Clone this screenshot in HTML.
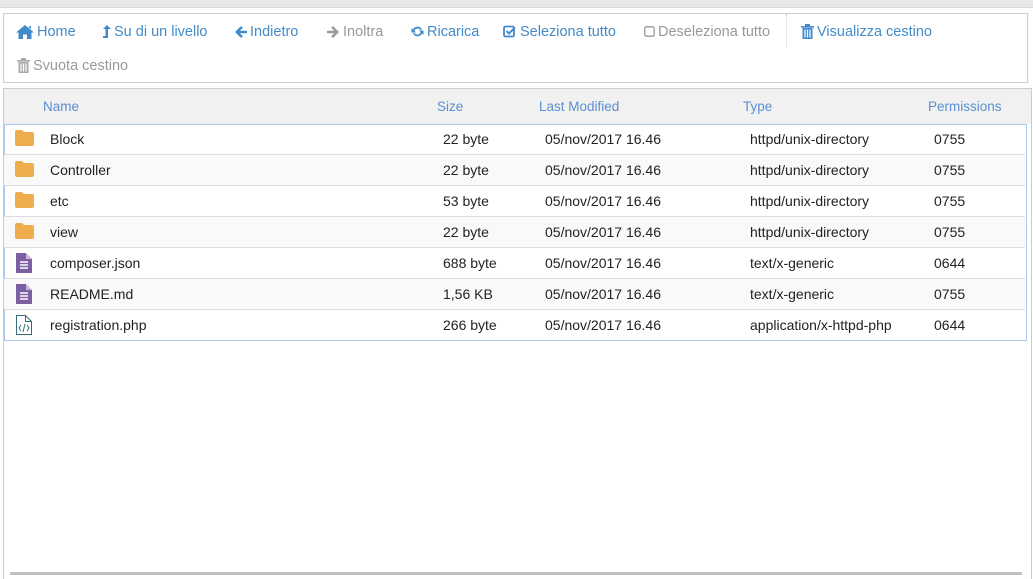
<!DOCTYPE html><html><head><style>
body{margin:0;width:1033px;height:575px;overflow:hidden;background:#fff;font-family:"Liberation Sans",sans-serif;position:relative}
.top{position:absolute;left:0;top:0;width:1033px;height:7px;background:#e8e8e8;border-bottom:1px solid #d8d8d8}
.tb{position:absolute;left:3px;top:13px;width:1023px;height:68px;border:1px solid #ccc}
.b{position:absolute;font-size:14.5px;color:#428bca;white-space:nowrap;line-height:16px}
.i{position:absolute}
.g{color:#999}
.sep{position:absolute;left:782px;top:0px;height:34px;border-left:1px dotted #ccc}
.tbl{position:absolute;left:3px;top:88px;width:1027px;height:490px;border:1px solid #ccc;border-bottom:none}
.hd{position:absolute;left:0;top:0;width:1027px;height:35px;background:#f1f1f1}
.h{position:absolute;top:10px;font-size:13.5px;color:#5b8fd0}
.sel{position:absolute;left:0;top:35px;width:1021px;height:215px;border:1px solid #a8c8f0}
.r{position:absolute;left:1px;width:1021px;height:30px;border-bottom:1px solid #ddd;font-size:14px;color:#222}
.r span{position:absolute;top:7px}
.alt{background:#f9f9f9}
.sc{position:absolute;left:10px;top:572px;width:1012px;height:3px;background:#c0c0c0}
</style></head><body>
<div class="top"></div>
<div class="tb">
<svg class="i" style="left:12px;top:10px" width="18" height="15" viewBox="0 0 18 15"><path d="M9 1L0 8.5h2.5V15h4.5V10.5h4V15h4.5V8.5H18zM13 2h2v3l-2-1.7z" fill="#428bca"/></svg>
<div class="b" style="left:33px;top:10px">Home</div>
<svg class="i" style="left:99px;top:11px" width="8" height="13" viewBox="0 0 8 13"><path d="M4 0L0 4h2.5v7H0v2h5V4h3z" fill="#428bca"/></svg>
<div class="b" style="left:110px;top:10px">Su di un livello</div>
<svg class="i" style="left:231px;top:12px" width="12" height="12" viewBox="0 0 12 12"><path d="M0 6l6-6 1.8 1.8-2.9 2.9H12v2.6H4.9l2.9 2.9L6 12z" fill="#428bca"/></svg>
<div class="b" style="left:246px;top:10px">Indietro</div>
<svg class="i" style="left:323px;top:12px" width="12" height="12" viewBox="0 0 12 12"><path d="M12 6L6 0 4.2 1.8l2.9 2.9H0v2.6h7.1l-2.9 2.9L6 12z" fill="#999"/></svg>
<div class="b g" style="left:339px;top:10px">Inoltra</div>
<svg class="i" style="left:407px;top:11px" width="13" height="13" viewBox="0 0 13 13"><path d="M11 4.5A5 5 0 0 0 2 4.5L.5 3v4.5H5L3.5 6a3.3 3.3 0 0 1 6-1zM2 8.5a5 5 0 0 0 9 0l1.5 1.5V5.5H8L9.5 7a3.3 3.3 0 0 1-6 1z" fill="#428bca"/></svg>
<div class="b" style="left:423px;top:10px">Ricarica</div>
<svg class="i" style="left:499px;top:11px" width="13" height="13" viewBox="0 0 13 13"><rect x="1" y="1.5" width="10" height="10" rx="1.5" fill="none" stroke="#428bca" stroke-width="1.8"/><path d="M3.5 6l2.5 2.5 6-6" fill="none" stroke="#428bca" stroke-width="2"/></svg>
<div class="b" style="left:516px;top:10px">Seleziona tutto</div>
<svg class="i" style="left:640px;top:12px" width="11" height="11" viewBox="0 0 11 11"><rect x=".8" y=".8" width="9.4" height="9.4" rx="1.5" fill="none" stroke="#999" stroke-width="1.3"/></svg>
<div class="b g" style="left:654px;top:10px">Deseleziona tutto</div>
<div class="sep"></div>
<svg class="i" style="left:797px;top:10px" width="13" height="15" viewBox="0 0 13 15"><path d="M0 2h13v1.6H0zM4 0h5v2H4zM1.5 4h10v11h-10z" fill="#428bca"/><path d="M4 5.5v8M6.5 5.5v8M9 5.5v8" stroke="#fff" stroke-width="1.2"/></svg>
<div class="b" style="left:813px;top:10px">Visualizza cestino</div>
<svg class="i" style="left:13px;top:44px" width="13" height="15" viewBox="0 0 13 15"><path d="M0 2h13v1.6H0zM4 0h5v2H4zM1.5 4h10v11h-10z" fill="#aaa"/><path d="M4 5.5v8M6.5 5.5v8M9 5.5v8" stroke="#fff" stroke-width="1.2"/></svg>
<div class="b g" style="left:29px;top:44px">Svuota cestino</div>
</div>
<div class="tbl">
<div class="hd">
<span class="h" style="left:39px">Name</span><span class="h" style="left:433px">Size</span><span class="h" style="left:535px">Last Modified</span><span class="h" style="left:739px">Type</span><span class="h" style="left:924px">Permissions</span>
</div>
<div class="sel"></div>
</div>
<div style="position:absolute;left:3px;top:124px">
<div class="r" style="top:0"><span style="left:11px;top:6px"><svg width="19" height="16"><path d="M0 2q0-2 2-2h5l2 2h8q2 0 2 2v10q0 2-2 2H2q-2 0-2-2z" fill="#f0ad4e"/></svg></span><span style="left:46px">Block</span><span style="left:439px">22 byte</span><span style="left:541px">05/nov/2017 16.46</span><span style="left:746px">httpd/unix-directory</span><span style="left:930px">0755</span></div>
<div class="r alt" style="top:31px"><span style="left:11px;top:6px"><svg width="19" height="16"><path d="M0 2q0-2 2-2h5l2 2h8q2 0 2 2v10q0 2-2 2H2q-2 0-2-2z" fill="#f0ad4e"/></svg></span><span style="left:46px">Controller</span><span style="left:439px">22 byte</span><span style="left:541px">05/nov/2017 16.46</span><span style="left:746px">httpd/unix-directory</span><span style="left:930px">0755</span></div>
<div class="r" style="top:62px"><span style="left:11px;top:6px"><svg width="19" height="16"><path d="M0 2q0-2 2-2h5l2 2h8q2 0 2 2v10q0 2-2 2H2q-2 0-2-2z" fill="#f0ad4e"/></svg></span><span style="left:46px">etc</span><span style="left:439px">53 byte</span><span style="left:541px">05/nov/2017 16.46</span><span style="left:746px">httpd/unix-directory</span><span style="left:930px">0755</span></div>
<div class="r alt" style="top:93px"><span style="left:11px;top:6px"><svg width="19" height="16"><path d="M0 2q0-2 2-2h5l2 2h8q2 0 2 2v10q0 2-2 2H2q-2 0-2-2z" fill="#f0ad4e"/></svg></span><span style="left:46px">view</span><span style="left:439px">22 byte</span><span style="left:541px">05/nov/2017 16.46</span><span style="left:746px">httpd/unix-directory</span><span style="left:930px">0755</span></div>
<div class="r" style="top:124px"><span style="left:12px;top:5px"><svg width="16" height="20"><path d="M0 0h10l6 6v14H0z" fill="#7b5fa0"/><path d="M10 0v6h6z" fill="#c9b8dd"/><path d="M4 9h8M4 12h8M4 15h8" stroke="#fff" stroke-width="1.5"/></svg></span><span style="left:46px">composer.json</span><span style="left:439px">688 byte</span><span style="left:541px">05/nov/2017 16.46</span><span style="left:746px">text/x-generic</span><span style="left:930px">0644</span></div>
<div class="r alt" style="top:155px"><span style="left:12px;top:5px"><svg width="16" height="20"><path d="M0 0h10l6 6v14H0z" fill="#7b5fa0"/><path d="M10 0v6h6z" fill="#c9b8dd"/><path d="M4 9h8M4 12h8M4 15h8" stroke="#fff" stroke-width="1.5"/></svg></span><span style="left:46px">README.md</span><span style="left:439px">1,56 KB</span><span style="left:541px">05/nov/2017 16.46</span><span style="left:746px">text/x-generic</span><span style="left:930px">0755</span></div>
<div class="r" style="top:186px;border-bottom:none"><span style="left:12px;top:5px"><svg width="16" height="20"><path d="M.5.5h9l6 6v13H.5z" fill="none" stroke="#3a6b7a"/><path d="M9.5.5v6h6" fill="none" stroke="#3a6b7a"/><path d="M5 10l-2 3 2 3M11 10l2 3-2 3M9 9l-2 8" fill="none" stroke="#3a6b7a"/></svg></span><span style="left:46px">registration.php</span><span style="left:439px">266 byte</span><span style="left:541px">05/nov/2017 16.46</span><span style="left:746px">application/x-httpd-php</span><span style="left:930px">0644</span></div>
</div>
<div class="sc"></div>
</body></html>
